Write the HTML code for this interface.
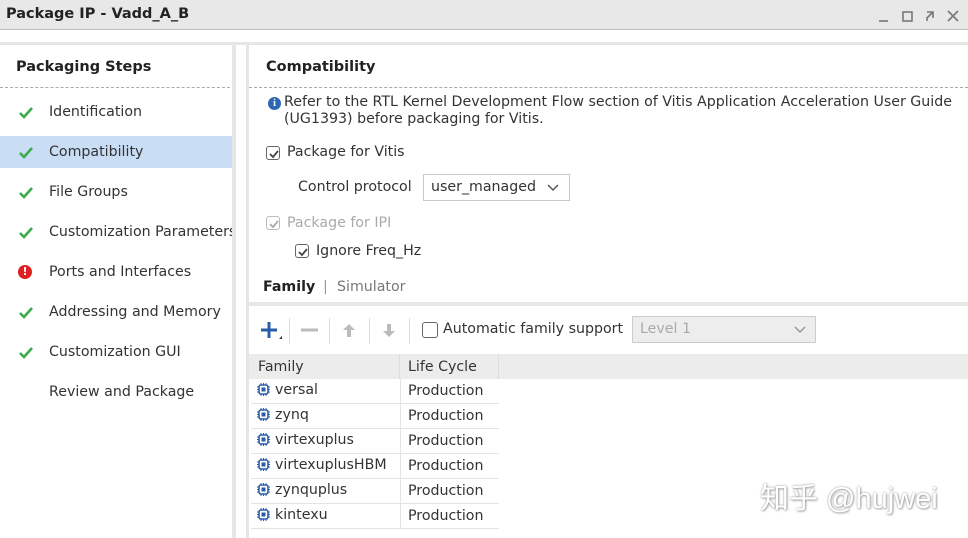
<!DOCTYPE html>
<html><head><meta charset="utf-8"><style>
*{margin:0;padding:0;box-sizing:border-box}
body{width:968px;height:538px;overflow:hidden;background:#fff;font-family:"DejaVu Sans","Liberation Sans",sans-serif;font-size:14.2px;color:#333;position:relative}
.a{position:absolute;white-space:nowrap}
.chk{position:absolute;width:14px;height:14px;border:1px solid #666;border-radius:3px;background:#fff}
.chk svg{position:absolute;left:1px;top:1px}
.ok{position:absolute;left:18px}
.row{position:absolute;left:251px;width:248px;height:25px;border-bottom:1px solid #e4e4e4}
.row .n{position:absolute;left:6px;top:3px}
.row .p{position:absolute;left:157px;top:4px}
.row .c{position:absolute;left:149px;top:0;bottom:0;border-left:1px solid #e4e4e4}
.ic{display:inline-block;vertical-align:-2px;margin-right:5px}
</style></head><body>
<div class="a" style="left:0;top:0;width:968px;height:30px;background:#e8e8e8;border-bottom:1px solid #bdbdbd"></div>
<div class="a" style="left:6px;top:6px;font-weight:bold;font-size:14.5px;color:#222">Package IP - Vadd_A_B</div>
<svg class="a" style="left:876px;top:8px" width="86" height="16" viewBox="0 0 86 16"><g stroke="#777" stroke-width="1.6" fill="none"><path d="M3 13h9"/><rect x="27" y="4" width="9" height="9"/><path d="M51 4h6v6M57 4l-6 6M51 9v4"/><path d="M72 3l10 10M82 3l-10 10"/></g></svg>
<div class="a" style="left:0;top:42px;width:968px;height:3px;background:#e6e6e6"></div>
<div class="a" style="left:232px;top:42px;width:4px;height:496px;background:#e6e6e6"></div>
<div class="a" style="left:246px;top:42px;width:3px;height:496px;background:#e6e6e6"></div>
<div class="a" style="left:16px;top:59px;font-weight:bold;font-size:14.5px;color:#222">Packaging Steps</div>
<div class="a" style="left:0;top:87px;width:230px;border-top:1px dashed #aaa"></div>
<div class="a" style="left:0;top:136px;width:232px;height:32px;background:#c9ddf5"></div>
<svg width="0" height="0" style="position:absolute"><defs><path id="ck" d="M2 8l4 4 8-9" stroke="#3cab4a" stroke-width="2.6" fill="none"/></defs></svg>
<svg class="a ok" style="top:105px" width="16" height="16"><use href="#ck"/></svg><div class="a" style="left:49px;top:104px">Identification</div>
<svg class="a ok" style="top:145px" width="16" height="16"><use href="#ck"/></svg><div class="a" style="left:49px;top:144px">Compatibility</div>
<svg class="a ok" style="top:185px" width="16" height="16"><use href="#ck"/></svg><div class="a" style="left:49px;top:184px">File Groups</div>
<svg class="a ok" style="top:225px" width="16" height="16"><use href="#ck"/></svg><div class="a" style="left:49px;top:224px;width:183px;overflow:hidden">Customization Parameters</div>
<div class="a" style="left:18px;top:265px;width:14px;height:14px;border-radius:7px;background:#e02020;color:#fff;font-size:11px;font-weight:bold;text-align:center;line-height:14px">!</div><div class="a" style="left:49px;top:264px">Ports and Interfaces</div>
<svg class="a ok" style="top:305px" width="16" height="16"><use href="#ck"/></svg><div class="a" style="left:49px;top:304px">Addressing and Memory</div>
<svg class="a ok" style="top:345px" width="16" height="16"><use href="#ck"/></svg><div class="a" style="left:49px;top:344px">Customization GUI</div>
<div class="a" style="left:49px;top:384px">Review and Package</div>

<div class="a" style="left:266px;top:59px;font-weight:bold;font-size:14.5px;color:#222">Compatibility</div>
<div class="a" style="left:249px;top:87px;width:719px;border-top:1px dashed #aaa"></div>
<div class="a" style="left:268px;top:97px;width:13px;height:13px;border-radius:7px;background:#2f66b3;color:#fff;font-size:10px;font-weight:bold;text-align:center;line-height:13px;font-family:'Liberation Serif',serif">i</div>
<div class="a" style="left:284px;top:94px;line-height:17px">Refer to the RTL Kernel Development Flow section of Vitis Application Acceleration User Guide<br>(UG1393) before packaging for Vitis.</div>
<div class="chk" style="left:266px;top:146px"><svg width="12" height="12"><path d="M2 6l3 3 5-6" stroke="#444" stroke-width="1.8" fill="none"/></svg></div>
<div class="a" style="left:287px;top:144px">Package for Vitis</div>
<div class="a" style="left:298px;top:179px">Control protocol</div>
<div class="a" style="left:423px;top:174px;width:147px;height:27px;border:1px solid #c8c8c8;background:#fff"></div>
<div class="a" style="left:431px;top:179px">user_managed</div>
<svg class="a" style="left:547px;top:184px" width="12" height="8"><path d="M1 1l5 5 5-5" stroke="#555" stroke-width="1.5" fill="none"/></svg>
<div class="chk" style="left:266px;top:216px;border-color:#bbb"><svg width="12" height="12"><path d="M2 6l3 3 5-6" stroke="#aaa" stroke-width="1.8" fill="none"/></svg></div>
<div class="a" style="left:287px;top:215px;color:#aaa">Package for IPI</div>
<div class="chk" style="left:295px;top:244px"><svg width="12" height="12"><path d="M2 6l3 3 5-6" stroke="#444" stroke-width="1.8" fill="none"/></svg></div>
<div class="a" style="left:316px;top:243px">Ignore Freq_Hz</div>
<div class="a" style="left:263px;top:279px;font-weight:bold;color:#222">Family</div>
<div class="a" style="left:323px;top:279px;color:#999">|</div>
<div class="a" style="left:337px;top:279px;color:#777">Simulator</div>
<div class="a" style="left:249px;top:302px;width:719px;height:4px;background:#e8e8e8"></div>
<svg class="a" style="left:258px;top:316px" width="160" height="30"><g stroke="#2a5da8" stroke-width="3"><path d="M11 6v16M3 14h16"/></g><path d="M21 23l3 0 0-3z" fill="#333"/><g stroke="#ddd"><path d="M31.5 2v26M71.5 2v26M111.5 2v26M151.5 2v26"/></g><path d="M43 14h17" stroke="#bbb" stroke-width="3"/><path d="M91 8l-6 6h4v7h4v-7h4z" fill="#bbb"/><path d="M131 21l-6-6h4v-7h4v7h4z" fill="#bbb"/></svg>
<div class="chk" style="left:422px;top:322px;width:16px;height:16px"></div>
<div class="a" style="left:443px;top:321px">Automatic family support</div>
<div class="a" style="left:632px;top:316px;width:184px;height:27px;border:1px solid #ccc;background:#ededed"></div>
<div class="a" style="left:640px;top:321px;color:#aaa">Level 1</div>
<svg class="a" style="left:794px;top:326px" width="12" height="8"><path d="M1 1l5 5 5-5" stroke="#999" stroke-width="1.5" fill="none"/></svg>
<div class="a" style="left:249px;top:354px;width:719px;height:25px;background:#ececec"></div>
<div class="a" style="left:399px;top:354px;height:25px;border-left:1px solid #ddd"></div>
<div class="a" style="left:498px;top:354px;height:25px;border-left:1px solid #ddd"></div>
<div class="a" style="left:258px;top:359px">Family</div>
<div class="a" style="left:408px;top:359px">Life Cycle</div>
<svg width="0" height="0" style="position:absolute"><defs><g id="chip"><rect x="2" y="2" width="9" height="9" rx="2" fill="none" stroke="#2a5da8" stroke-width="1.6"/><rect x="4.5" y="4.5" width="4" height="4" fill="#2a5da8"/><path d="M4 0v2M6.5 0v2M9 0v2M4 11v2M6.5 11v2M9 11v2M0 4h2M0 6.5h2M0 9h2M11 4h2M11 6.5h2M11 9h2" stroke="#2a5da8"/></g></defs></svg>
<div class="row" style="top:379px"><div class="c"></div><span class="n"><svg class="ic" width="13" height="13"><use href="#chip"/></svg>versal</span><span class="p">Production</span></div>
<div class="row" style="top:404px"><div class="c"></div><span class="n"><svg class="ic" width="13" height="13"><use href="#chip"/></svg>zynq</span><span class="p">Production</span></div>
<div class="row" style="top:429px"><div class="c"></div><span class="n"><svg class="ic" width="13" height="13"><use href="#chip"/></svg>virtexuplus</span><span class="p">Production</span></div>
<div class="row" style="top:454px"><div class="c"></div><span class="n"><svg class="ic" width="13" height="13"><use href="#chip"/></svg>virtexuplusHBM</span><span class="p">Production</span></div>
<div class="row" style="top:479px"><div class="c"></div><span class="n"><svg class="ic" width="13" height="13"><use href="#chip"/></svg>zynquplus</span><span class="p">Production</span></div>
<div class="row" style="top:504px"><div class="c"></div><span class="n"><svg class="ic" width="13" height="13"><use href="#chip"/></svg>kintexu</span><span class="p">Production</span></div>
<div class="a" style="left:760px;top:475px;font-size:29px;color:#fff;text-shadow:0 0 2px #999,1px 1px 2px #aaa;font-family:'Liberation Sans','Noto Sans CJK SC',sans-serif">知乎 @hujwei</div>
</body></html>
